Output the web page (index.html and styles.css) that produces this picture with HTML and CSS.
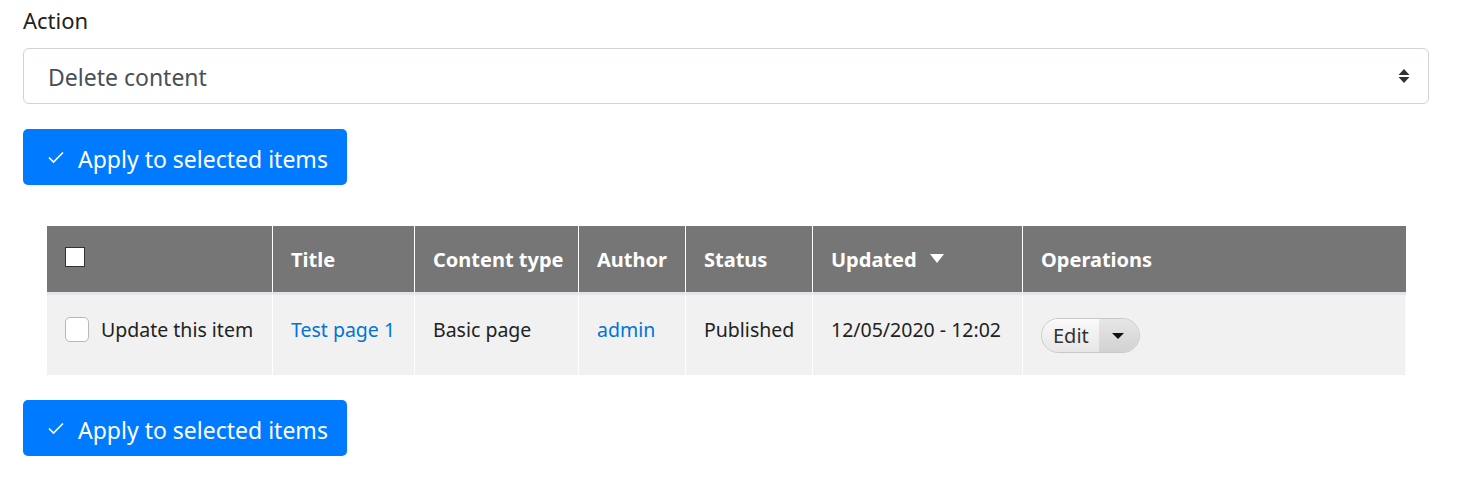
FILE: index.html
```html
<!DOCTYPE html>
<html lang="en">
<head>
    <meta charset="UTF-8">
    <title>Bulk form</title>
    <link rel="stylesheet" href="styles.css">
</head>
<body>
    <form class="bulk">
        <label class="etiket" for="action">Action</label>
        <div class="secim">
            <select id="action">
                <option>Delete content</option>
            </select>
            <svg class="ok" width="12" height="16" viewBox="0 0 12 16"><path d="M6 1 L11.5 7 H0.5 Z M0.5 9 H11.5 L6 15 Z" fill="#333"/></svg>
        </div>
        <button type="button" class="uygula">
            <svg width="18" height="14" viewBox="0 0 18 14"><path d="M2 7.5 L6.5 12 L16 2.5" fill="none" stroke="#fff" stroke-width="1.6"/></svg>
            Apply to selected items
        </button>

        <table class="liste">
            <thead>
                <tr>
                    <th class="kutu"><span class="hkutu"></span></th>
                    <th class="c-title">Title</th>
                    <th class="c-type">Content type</th>
                    <th class="c-author">Author</th>
                    <th class="c-status">Status</th>
                    <th class="c-updated">Updated <span class="sira"></span></th>
                    <th>Operations</th>
                </tr>
            </thead>
            <tbody>
                <tr>
                    <td class="kutu"><label class="satir"><span class="rkutu"></span>Update this item</label></td>
                    <td><a href="#">Test page 1</a></td>
                    <td>Basic page</td>
                    <td><a href="#">admin</a></td>
                    <td>Published</td>
                    <td>12/05/2020 - 12:02</td>
                    <td>
                        <div class="islem">
                            <span class="duzenle">Edit</span><span class="acilir"></span>
                        </div>
                    </td>
                </tr>
            </tbody>
        </table>

        <button type="button" class="uygula">
            <svg width="18" height="14" viewBox="0 0 18 14"><path d="M2 7.5 L6.5 12 L16 2.5" fill="none" stroke="#fff" stroke-width="1.6"/></svg>
            Apply to selected items
        </button>
    </form>
</body>
</html>
```

FILE: styles.css
```css
*{
    margin: 0;
    padding: 0;
    box-sizing: border-box;
}
body{
    font-family: "Noto Sans", "Open Sans", sans-serif;
    color: #212529;
    background: #fff;
}
.bulk{
    padding: 5px 33px 0 23px;
    display: flex;
    flex-direction: column;
    align-items: flex-start;
}
.etiket{
    font-size: 22px;
    line-height: 30px;
    color: #222;
    margin-bottom: 13px;
}
.secim{
    position: relative;
    width: 100%;
}
.secim select{
    appearance: none;
    width: 100%;
    height: 56px;
    border: 1px solid #ced4da;
    border-radius: 6px;
    background: #fff;
    font-family: inherit;
    font-size: 23px;
    color: #495057;
    padding: 2px 24px 0;
}
.ok{
    position: absolute;
    right: 19px;
    top: 20px;
}
.uygula{
    margin-top: 25px;
    height: 56px;
    padding: 3px 19px 0 24px;
    background: #007bff;
    border: none;
    border-radius: 5px;
    color: #fff;
    font-family: inherit;
    font-size: 23px;
    display: flex;
    align-items: center;
    gap: 13px;
}
.uygula svg{
    margin-top: -4px;
}
.liste{
    margin: 41px 0 0 24px;
    width: 1359px;
    table-layout: fixed;
    border-collapse: separate;
    border-spacing: 0;
    font-size: 19.5px;
}
.liste th{
    background: #767676;
    color: #fff;
    text-align: left;
    font-weight: bold;
    font-size: 20px;
    height: 69px;
    padding: 0 16px 0 18px;
    border-left: 1px solid #fff;
    border-bottom: 3px solid #e4e4ea;
    white-space: nowrap;
}
.liste th:first-child,
.liste td:first-child{
    border-left: none;
}
.liste td{
    background: #f1f1f1;
    height: 80px;
    padding: 0 16px 11px 18px;
    border-left: 1px solid #fff;
    white-space: nowrap;
    color: #222;
}
.liste td:last-child{
    border-right: 1px solid #fafafa;
}
.liste a{
    color: #0074d9;
    text-decoration: none;
}
.kutu{ width: 225px; }
.c-title{ width: 142px; }
.c-type{ width: 164px; }
.c-author{ width: 107px; }
.c-status{ width: 127px; }
.c-updated{ width: 210px; }
.hkutu{
    display: block;
    width: 20px;
    height: 20px;
    background: #fff;
    border: 1px solid #333;
    margin-top: -5px;
}
.satir{
    display: flex;
    align-items: center;
    gap: 12px;
}
.rkutu{
    width: 24px;
    height: 25px;
    background: #fff;
    border: 1px solid #b8b8b8;
    border-radius: 5px;
}
.sira{
    display: inline-block;
    width: 0;
    height: 0;
    border-left: 7px solid transparent;
    border-right: 7px solid transparent;
    border-top: 9px solid #fff;
    margin-left: 8px;
    vertical-align: 4px;
}
.islem{
    display: inline-flex;
    height: 35px;
    border: 1px solid #c8c8c8;
    border-radius: 18px;
    overflow: hidden;
    margin-top: 11px;
}
.duzenle{
    background: linear-gradient(#fafafa, #e6e6e6);
    padding: 0 10px 0 11px;
    font-size: 20px;
    line-height: 33px;
    color: #333;
}
.acilir{
    width: 40px;
    background: linear-gradient(#e6e6e6, #d2d2d2);
    position: relative;
}
.acilir::after{
    content: "";
    position: absolute;
    left: 13px;
    top: 14px;
    border-left: 6px solid transparent;
    border-right: 6px solid transparent;
    border-top: 6px solid #111;
}
```
